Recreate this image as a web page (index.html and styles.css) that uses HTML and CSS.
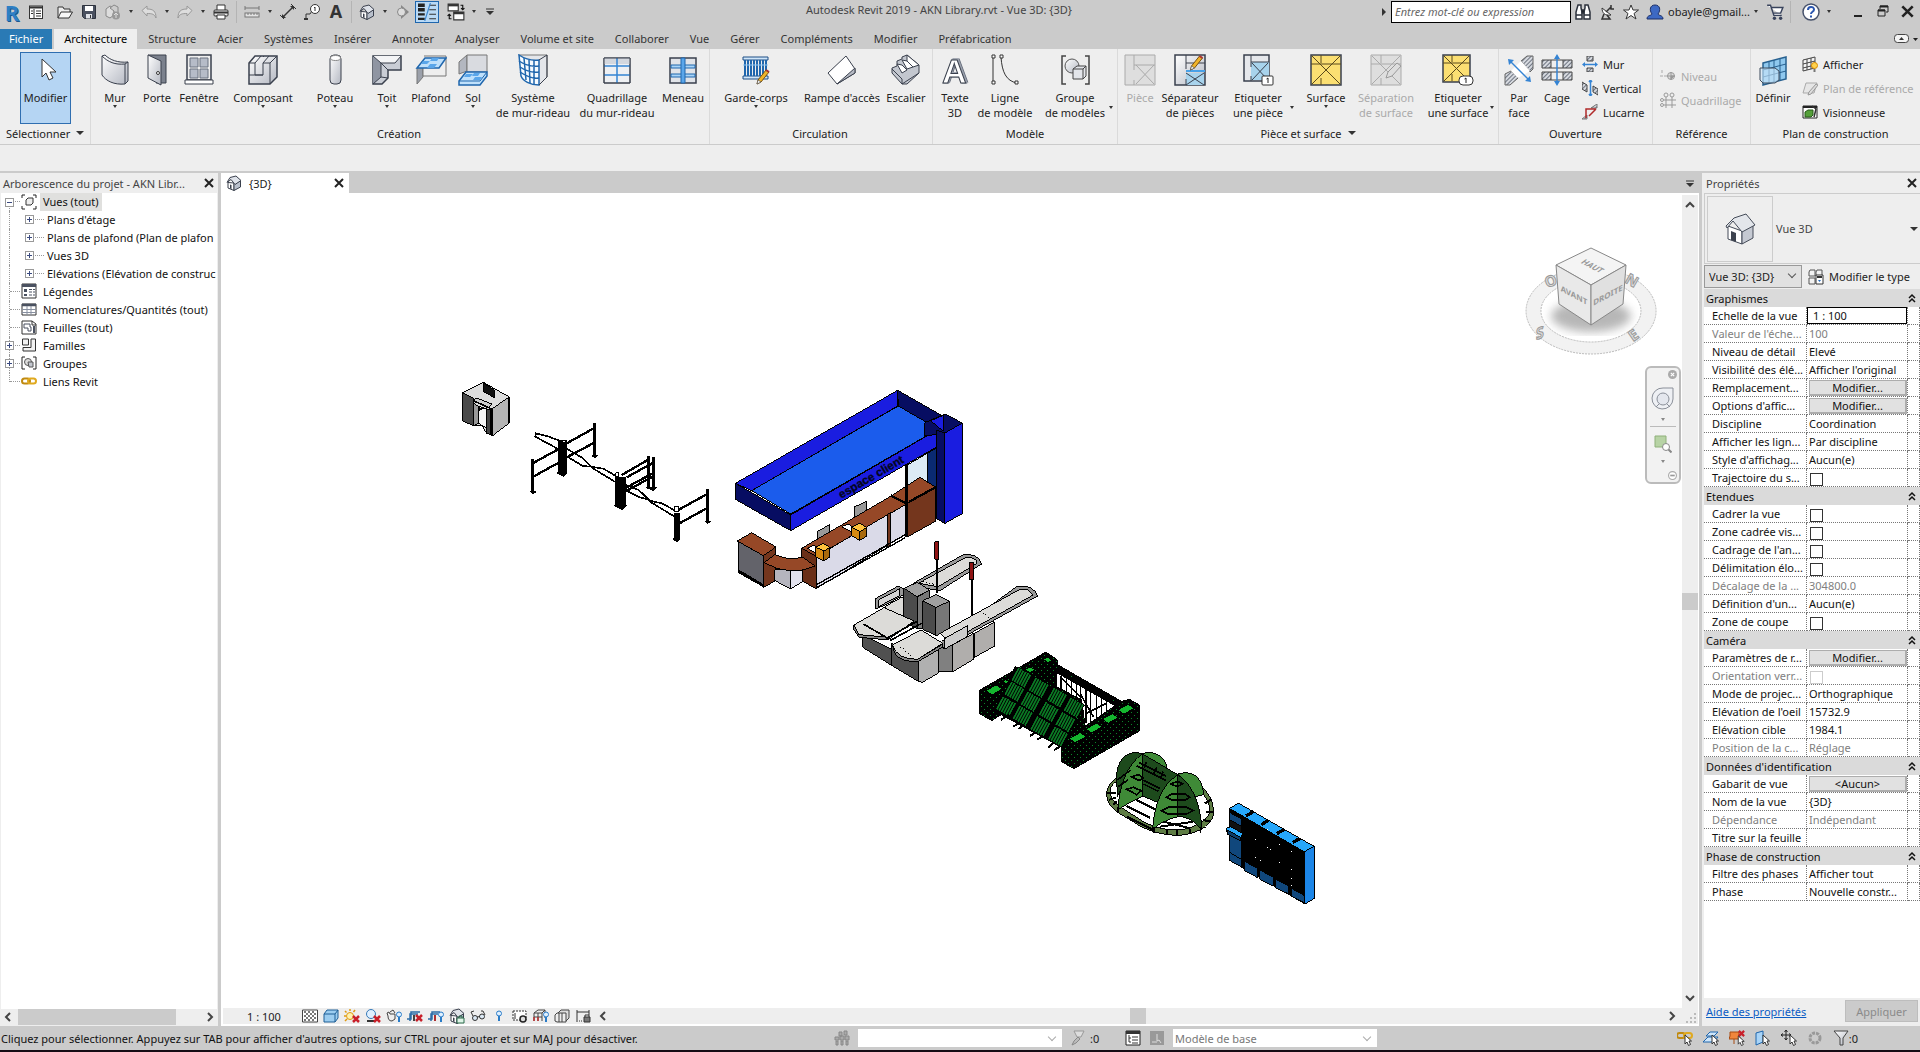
FILE: index.html
```html
<!DOCTYPE html>
<html lang="fr">
<head>
    <meta charset="UTF-8">
    <meta name="viewport" content="width=device-width, initial-scale=1.0">
    <title>Autodesk Revit 2019 - AKN Library.rvt - Vue 3D: {3D}</title>
    <link rel="stylesheet" href="styles.css">
</head>
<body>
    <!-- shared icons -->
    <svg class="sprite" aria-hidden="true">
        <defs>
            <linearGradient id="metal" x1="0" y1="0" x2="1" y2="1">
                <stop offset="0" stop-color="#fff"/><stop offset="1" stop-color="#b4b8c2"/>
            </linearGradient>
            <pattern id="hatch" width="3" height="3" patternUnits="userSpaceOnUse" patternTransform="rotate(45)">
                <rect width="3" height="3" fill="#d6d9df"/><path d="M0 0V3" stroke="#6d7480" stroke-width="2"/>
            </pattern>
        </defs>
        <symbol id="i-house" viewBox="0 0 16 16">
            <path d="M2 7.500V13l6 2.500V8z" fill="#fff" stroke="#3a404d"/>
            <path d="M8 8.500v7L14.500 12V6z" fill="#b9c0cc" stroke="#3a404d"/>
            <path d="M1 7.500L4 2.500 10 1l5 4.500-6 4-4-5z" fill="#dfe3ea" stroke="#3a404d"/>
            <path d="M4 9.500v4l1.500.500v-4z" fill="#3a404d"/>
        </symbol>
        <symbol id="i-close" viewBox="0 0 10 10">
            <path d="M1 1l8 8M9 1L1 9" stroke="#222" stroke-width="2"/>
        </symbol>
        <symbol id="i-left" viewBox="0 0 8 10"><path d="M6 1L2 5l4 4" fill="none" stroke="#444" stroke-width="2"/></symbol>
        <symbol id="i-right" viewBox="0 0 8 10"><path d="M2 1l4 4-4 4" fill="none" stroke="#444" stroke-width="2"/></symbol>
        <symbol id="i-up" viewBox="0 0 10 8"><path d="M1 6l4-4 4 4" fill="none" stroke="#444" stroke-width="2"/></symbol>
        <symbol id="i-down" viewBox="0 0 10 8"><path d="M1 2l4 4 4-4" fill="none" stroke="#444" stroke-width="2"/></symbol>
        <symbol id="i-custom" viewBox="0 0 8 8"><path d="M0 1h8" stroke="#333"/><path d="M0 3h8L4 7z" fill="#333"/></symbol>
        <symbol id="i-fold" viewBox="0 0 8 10"><path d="M1 5l3-3 3 3M1 9l3-3 3 3" fill="none" stroke="#111" stroke-width="1.500"/></symbol>
        <symbol id="i-cross" viewBox="0 0 8 8"><path d="M1 1l6 6M7 1L1 7" stroke="#c8202a" stroke-width="2.500"/></symbol>
        <symbol id="i-bulb" viewBox="0 0 6 12"><circle cx="3" cy="3.500" r="2.500" fill="#dff0ff" stroke="#2a7cc8"/><path d="M3 6v5" stroke="#2a7cc8" stroke-width="2"/></symbol>
        <symbol id="i-arrow" viewBox="0 0 8 12"><path d="M1 1v9l2-2 1.500 3.500 2-1L5 7h2.500z" fill="#fff" stroke="#333"/></symbol>
        <symbol id="i-pencil" viewBox="0 0 14 16"><path d="M1 15l1-4L10 1l3 2-8 10z" fill="#f0b429" stroke="#7b5310"/><path d="M1 15l1-4 3 2z" fill="#fff" stroke="#555" stroke-width=".7"/><path d="M10 1l3 2" stroke="#a33" stroke-width="2"/></symbol>
    </svg>

    <header class="titlebar">
        <div class="qat">
            <button class="qbtn logo" aria-label="Revit">R</button>
            <button class="qbtn" aria-label="Accueil"><svg viewBox="0 0 16 16" width="16" height="16"><rect x="1.500" y="2" width="13" height="12.500" fill="#fff" stroke="#333"/><path d="M1 3.500h14" stroke="#333" stroke-width="2"/><path d="M6 5v9M8 7h5M8 9.500h5M8 12h5M3 7h2M3 9.500h2" stroke="#333"/></svg></button>
            <button class="qbtn after" aria-label="Ouvrir"><svg viewBox="0 0 16 16" width="16" height="16"><path d="M1 14V3h5l1 2h6v3" fill="#eee" stroke="#333"/><path d="M1 14l3-6h11.500L12 14z" fill="#f7f7f7" stroke="#333"/></svg></button>
            <button class="qbtn" aria-label="Enregistrer"><svg viewBox="0 0 16 16" width="16" height="16"><path d="M1.500 1.500h13v13h-11l-2-2z" fill="#4a5160" stroke="#2d323d"/><path d="M4 2h8v5H4z" fill="#fff"/><path d="M5 10h6v4.500H5z" fill="#dfe2e8"/><path d="M9 11h1v3H9z" fill="#333"/></svg></button>
            <button class="qbtn" aria-label="Synchroniser"><svg viewBox="0 0 16 16" width="16" height="16"><path d="M1 5l4-3 4 2v7l-4 3-4-2z" fill="#ddd" stroke="#888"/><path d="M5 4l4-3 4 2v7l-4 3V7z" fill="#ccc" stroke="#888"/><circle cx="11" cy="11.500" r="4" fill="#999"/><path d="M9 11l2-2 2 2M11 9v5" stroke="#ddd" fill="none"/></svg></button>
            <button class="qdrop" aria-label="Options de synchronisation"><i class="caret"></i></button>
            <button class="qbtn" aria-label="Annuler"><svg viewBox="0 0 16 16" width="16" height="16"><path d="M1 6.500L6 2v3c6 0 9 2 9 9-1.500-4-4-4.500-9-4.500v2.500z" fill="#ddd" stroke="#999"/></svg></button>
            <button class="qdrop" aria-label="Liste annuler"><i class="caret"></i></button>
            <button class="qbtn" aria-label="Rétablir"><svg viewBox="0 0 16 16" width="16" height="16"><path d="M15 6.500L10 2v3c-6 0-9 2-9 9 1.500-4 4-4.500 9-4.500v2.500z" fill="#ddd" stroke="#999"/></svg></button>
            <button class="qdrop" aria-label="Liste rétablir"><i class="caret"></i></button>
            <button class="qbtn" aria-label="Imprimer"><svg viewBox="0 0 16 16" width="16" height="16"><path d="M4 6V1h8v5" fill="#fff" stroke="#333"/><rect x="1" y="6" width="14" height="6" rx="1" fill="#e8e8e8" stroke="#333"/><path d="M1 8.500h14" stroke="#333" stroke-width="2"/><path d="M4 11h8v4H4z" fill="#fff" stroke="#333"/></svg></button>
            <span class="qsep"></span>
            <button class="qbtn" aria-label="Mesurer"><svg viewBox="0 0 16 16" width="16" height="16"><path d="M1 2v4M15 2v4M1 4h14" stroke="#777"/><rect x="1" y="9" width="14" height="4" fill="#e2e2e2" stroke="#777"/><path d="M4 9v2M7 9v2M10 9v2M13 9v2" stroke="#777"/></svg></button>
            <button class="qdrop" aria-label="Options de mesure"><i class="caret"></i></button>
            <button class="qbtn" aria-label="Cote alignée"><svg viewBox="0 0 16 16" width="16" height="16"><path d="M3 13L13 3" stroke="#333" stroke-width="1.500"/><path d="M2 10v4h4zM10 2h4v4z" fill="#333"/><path d="M0 11l4 4M11 0l5 5" stroke="#333"/></svg></button>
            <button class="qbtn" aria-label="Etiquette"><svg viewBox="0 0 16 16" width="16" height="16"><path d="M2 15v-5h4l2-3" fill="none" stroke="#333"/><path d="M0 14h4v2H0z" fill="#333"/><circle cx="11" cy="5" r="4.500" fill="#fff" stroke="#333"/><path d="M10 4l1-1v4" fill="none" stroke="#333"/></svg></button>
            <button class="qbtn letter" aria-label="Texte">A</button>
            <span class="qsep"></span>
            <button class="qbtn" aria-label="Vue 3D par défaut"><svg width="16" height="16"><use href="#i-house"/></svg></button>
            <button class="qdrop" aria-label="Liste des vues 3D"><i class="caret"></i></button>
            <button class="qbtn" aria-label="Coupe"><svg viewBox="0 0 16 16" width="16" height="16"><path d="M6 1l8 7-8 7z" fill="#888"/><circle cx="6.500" cy="8" r="4" fill="#ddd" stroke="#888"/></svg></button>
            <button class="qbtn active" aria-label="Lignes fines"><svg viewBox="0 0 16 16" width="18" height="18"><path d="M0 2h6M0 6h6" stroke="#222" stroke-width="3"/><path d="M0 10h6M0 14h6" stroke="#222" stroke-width="2"/><path d="M10 2h6M10 6h6M10 10h6M10 14h6" stroke="#333"/><path d="M11 0L6 16" stroke="#3a86d0"/></svg></button>
            <button class="qbtn after" aria-label="Changer de fenêtre"><svg viewBox="0 0 16 16" width="18" height="18"><path d="M1 1h9v6H1z" fill="#fff" stroke="#333"/><path d="M1 2h9" stroke="#333" stroke-width="2"/><path d="M6 8h9v7H6z" fill="#fff" stroke="#333"/><path d="M6 9h9" stroke="#333" stroke-width="2"/><path d="M12 2h2v4M12.500 4.500L14 6l1.500-1.500M4 14H2v-4M.5 11.500L2 10l1.500 1.500" fill="none" stroke="#111"/></svg></button>
            <button class="qdrop" aria-label="Liste des fenêtres"><i class="caret"></i></button>
            <button class="qdrop last" aria-label="Personnaliser"><svg width="8" height="8"><use href="#i-custom"/></svg></button>
        </div>
        <h1 class="doc-title">Autodesk Revit 2019 - AKN Library.rvt - Vue 3D: {3D}</h1>
        <div class="infocenter">
            <i class="caret side"></i>
            <input class="search" type="text" placeholder="Entrez mot-clé ou expression" aria-label="Recherche">
            <button class="qbtn" aria-label="Rechercher"><svg viewBox="0 0 16 16" width="16" height="16"><path d="M3 1h3v3l1 4v7H1V8zM10 1h3l2 7v7H9V8l1-4z" fill="#fff" stroke="#2d323d" stroke-width="1.500"/><path d="M7 6h2v3H7zM1 11h6M9 11h6" stroke="#2d323d" stroke-width="1.500"/></svg></button>
            <button class="qbtn" aria-label="Communication"><svg viewBox="0 0 16 16" width="16" height="16"><path d="M3 4c0 5 3 8 9 7z" fill="#fff" stroke="#333"/><path d="M7 8l5-5M12 1v4h3M5 10l-2 5h8l-3-4" fill="none" stroke="#333" stroke-width="1.500"/></svg></button>
            <button class="qbtn" aria-label="Favoris"><svg viewBox="0 0 16 16" width="16" height="16"><path d="M8 1l2 5h5.500l-4.500 3.500L13 15l-5-3.500L3 15l2-5.500L.5 6H6z" fill="#fff" stroke="#333"/></svg></button>
            <button class="account"><svg viewBox="0 0 18 18" width="18" height="18"><path d="M1 16c0-4 4-3 5-5-3-4-2-9 3-9s6 5 3 9c1 2 5 1 5 5z" fill="#3d69c4" stroke="#1d2f66"/></svg><span>obayle@gmail...</span><i class="caret"></i></button>
            <button class="qbtn" aria-label="Boutique"><svg viewBox="0 0 16 16" width="18" height="18"><path d="M1 2h3l3 9h7M4.500 4H15l-2 5H6" fill="#fff" stroke="#39435c" stroke-width="1.300"/><circle cx="7.500" cy="13.500" r="1.500" fill="#39435c"/><circle cx="13" cy="13.500" r="1.500" fill="#39435c"/></svg></button>
            <span class="qsep"></span>
            <button class="qbtn after" aria-label="Aide"><svg viewBox="0 0 18 18" width="18" height="18"><circle cx="9" cy="9" r="8" fill="#fff" stroke="#47526b" stroke-width="1.500"/><path d="M6 7c0-4 6-4 6-.5C12 9 9 8.500 9 11M9 12.500v2" fill="none" stroke="#2a56b0" stroke-width="2"/></svg></button>
            <button class="qdrop" aria-label="Menu aide"><i class="caret"></i></button>
            <div class="window-btns">
                <button class="wbtn" aria-label="Réduire"><svg viewBox="0 0 12 12" width="12" height="12"><path d="M2 11h8" stroke="#222" stroke-width="2"/></svg></button>
                <button class="wbtn" aria-label="Restaurer"><svg viewBox="0 0 12 12" width="12" height="12"><path d="M3 4V1h8v6H9" fill="none" stroke="#222"/><path d="M3 1.500h8" stroke="#222" stroke-width="2"/><path d="M1 5h7v6H1z" fill="none" stroke="#222"/><path d="M1 5.500h7" stroke="#222" stroke-width="2"/></svg></button>
                <button class="wbtn" aria-label="Fermer"><svg width="13" height="13"><use href="#i-close"/></svg></button>
            </div>
        </div>
    </header>

    <nav class="tabs">
        <a class="tab file" href="#">Fichier</a>
        <a class="tab current" href="#">Architecture</a>
        <a class="tab" href="#">Structure</a>
        <a class="tab" href="#">Acier</a>
        <a class="tab" href="#">Systèmes</a>
        <a class="tab" href="#">Insérer</a>
        <a class="tab" href="#">Annoter</a>
        <a class="tab" href="#">Analyser</a>
        <a class="tab" href="#">Volume et site</a>
        <a class="tab" href="#">Collaborer</a>
        <a class="tab" href="#">Vue</a>
        <a class="tab" href="#">Gérer</a>
        <a class="tab" href="#">Compléments</a>
        <a class="tab" href="#">Modifier</a>
        <a class="tab" href="#">Préfabrication</a>
        <button class="ribbon-toggle" aria-label="Réduire le ruban"><svg viewBox="0 0 24 10" width="24" height="10"><rect x=".5" y=".5" width="14" height="8" rx="3" fill="#f4f4f4" stroke="#444"/><path d="M5 6l2.500-3L10 6z" fill="#333"/><path d="M19 4h5l-2.500 3z" fill="#222"/></svg></button>
    </nav>

    <section class="ribbon">
        <div class="panel select-panel">
            <div class="tools">
                <button class="tool modify"><svg viewBox="0 0 32 32" width="32" height="32"><path d="M12 5v18l4-4 3 7 4-2-3-6h6z" fill="#fff" stroke="#333"/></svg><span>Modifier</span></button>
            </div>
            <div class="panel-title left">Sélectionner <i class="caret big"></i></div>
        </div>

        <div class="panel roomy">
            <div class="tools">
                <button class="tool w48"><svg viewBox="0 0 32 32" width="32" height="32"><path d="M3 2l3-1c5 5 13 8 23 7v19l-3 3C15 31 7 27 3 21z" fill="url(#metal)" stroke="#3a404d"/><path d="M3 2c6 6 13 9 23 8v20M26 10l3-2" fill="none" stroke="#3a404d"/></svg><span>Mur</span><i class="caret"></i></button>
                <button class="tool w36"><svg viewBox="0 0 32 32" width="32" height="32"><path d="M7 1h18v28H15" fill="#7b818d" stroke="#3a404d"/><path d="M7 1l13 6v24L7 24z" fill="url(#metal)" stroke="#3a404d"/><circle cx="17" cy="19" r="1.500" fill="#fff" stroke="#333"/></svg><span>Porte</span></button>
                <button class="tool w48"><svg viewBox="0 0 32 32" width="32" height="32"><path d="M4 1h24v25H4z" fill="#eee" stroke="#3a404d" stroke-width="1.500"/><path d="M7 4h8v9H7zM17 4h8v9h-8zM7 15h8v9H7zM17 15h8v9h-8z" fill="#b6bcc8" stroke="#6b7280"/><path d="M2 26h28v4H2z" fill="#fff" stroke="#3a404d"/></svg><span>Fenêtre</span></button>
                <button class="tool w80"><svg viewBox="0 0 32 32" width="32" height="32"><path d="M2 9l6-7h22v21l-7 7H2z" fill="url(#metal)" stroke="#3a404d" stroke-width="1.500"/><path d="M14 2l-6 7v12h8V9l6-7M17 2l-1 1M2 9h6M16 9h7l7-7M16 21H2M23 9v21" fill="none" stroke="#3a404d"/></svg><span>Composant</span><i class="caret"></i></button>
                <button class="tool w64"><svg viewBox="0 0 32 32" width="32" height="32"><rect x="11" y="1" width="11" height="29" rx="4" fill="url(#metal)" stroke="#3a404d"/><ellipse cx="16.500" cy="4" rx="5" ry="2.500" fill="#fff" stroke="#888"/></svg><span>Poteau</span><i class="caret"></i></button>
                <button class="tool w40"><svg viewBox="0 0 32 32" width="32" height="32"><path d="M2 2h28v14H17v8l-6 6H2z" fill="#c9cdd5" stroke="#3a404d" stroke-width="1.500"/><path d="M2 2l8 7v14l-8 7z" fill="#8f95a2"/><path d="M2 2l8 7h14l6-7z" fill="#f3f4f6"/><path d="M2 2l8 7v14l-8 7M10 9h14l6-7M10 9l7 7M10 23l7 1" fill="none" stroke="#3a404d"/></svg><span>Toit</span><i class="caret"></i></button>
                <button class="tool w48"><svg viewBox="0 0 32 32" width="32" height="32"><path d="M2 14V30l6-7V8z" fill="#9ba0aa" stroke="#777"/><path d="M9 2h22v20H8V8" fill="#eee" stroke="#777"/><path d="M2 14L10 4h21l-7 10z" fill="#bfe0fb" stroke="#1f66ad" stroke-width="1.500"/><path d="M8 7h7l-3 3H6zM17 4h7l-2 3h-7zM15 10h7l-3 4h-7z" fill="#5aa6ea"/></svg><span>Plafond</span></button>
                <button class="tool w36"><svg viewBox="0 0 32 32" width="32" height="32"><path d="M2 20V8l8-7v16z" fill="#b3b7c0" stroke="#777"/><path d="M10 1h20v17H10z" fill="#d9dbe0" stroke="#777"/><path d="M2 27L9 18h21v4l-7 9H2z" fill="#bfe0fb" stroke="#1f66ad" stroke-width="1.500"/><path d="M2 27h21l7-9" fill="none" stroke="#1f66ad"/><path d="M9 20h7l-3 3H7zM18 23h7l-2 3h-7zM17 19h6l-2 3h-6z" fill="#5aa6ea"/></svg><span>Sol</span><i class="caret"></i></button>
                <button class="tool w84"><svg viewBox="0 0 32 32" width="32" height="32"><path d="M2 1h28v22l-8 8z" fill="#e4e6ea" stroke="#777"/><path d="M2 1c6 4 12 6 20 5v25C13 31 6 27 4 22z" fill="#f6fbff" stroke="#1f66ad" stroke-width="1.500"/><path d="M2 7c6 4 12 6 20 5M3 13c6 4 12 6 19 5M3 18c6 4 12 7 19 6M7 4l2 22M12 6l1 23M17 6v25" fill="none" stroke="#1f66ad" stroke-width="1.500"/><path d="M22 6l8-5v22l-8 8" fill="none" stroke="#3a404d"/></svg><span>Système<br>de mur-rideau</span></button>
                <button class="tool w84"><svg viewBox="0 0 32 32" width="32" height="32"><path d="M3 4h26v25H3z" fill="#eef0f3" stroke="#3a404d"/><path d="M3 4h26v6H3z" fill="#d3d7de"/><path d="M16 4v25M3 12h26M3 21h26" stroke="#3584d4" stroke-width="1.500"/><path d="M3 4h26v25H3z" fill="none" stroke="#3a404d"/></svg><span>Quadrillage<br>du mur-rideau</span></button>
                <button class="tool w48"><svg viewBox="0 0 32 32" width="32" height="32"><path d="M3 4h26v25H3z" fill="#e0e3e8" stroke="#3a404d" stroke-width="1.500"/><path d="M4 11h24v3H4zM4 20h24v3H4z" fill="#a9d4f7" stroke="#1f66ad"/><path d="M14 4h4v25h-4z" fill="#5aa6ea" stroke="#1f66ad"/></svg><span>Meneau</span></button>
            </div>
            <div class="panel-title">Création</div>
        </div>

        <div class="panel roomy">
            <div class="tools">
                <button class="tool w92"><svg viewBox="0 0 32 32" width="32" height="32"><path d="M3 3h25v3H3zM3 22h25v3H3z" fill="#cfe6fa" stroke="#1f4f85"/><path d="M5 6v16M8 6v16M11 6v16M14 6v16M17 6v16M20 6v16M23 6v16M26 6v16" stroke="#1f66ad" stroke-width="2"/><path d="M3 11h25" stroke="#8cc4f2"/><use href="#i-pencil" x="16" y="15" width="14" height="16"/></svg><span>Garde-corps</span><i class="caret"></i></button>
                <button class="tool w80"><svg viewBox="0 0 32 32" width="32" height="32"><path d="M2 19L20 2l9 13v4L11 30z" fill="#fff" stroke="#3a404d"/><path d="M11 30l18-11v-5z" fill="#b4b8c2" stroke="#3a404d"/></svg><span>Rampe d'accès</span></button>
                <button class="tool w48"><svg viewBox="0 0 32 32" width="32" height="32"><path d="M2 14l5-2v-5l5-2V3l5-2 12 10v8L17 30h-5L2 19z" fill="#c3c7cf" stroke="#3a404d"/><path d="M17 1l12 10-6 2-6-6zM12 6l5 1 6 6-6 2zM7 10l5 1 5 5-5 3z" fill="#fff" stroke="#3a404d"/><path d="M2 15l10 10v5l17-11" fill="none" stroke="#3a404d"/></svg><span>Escalier</span></button>
            </div>
            <div class="panel-title">Circulation</div>
        </div>

        <div class="panel">
            <div class="tools">
                <button class="tool w44"><svg class="big-a" viewBox="0 0 32 32" width="32" height="32"><text x="3" y="29">A</text></svg><span>Texte<br>3D</span></button>
                <button class="tool w56"><svg viewBox="0 0 32 32" width="32" height="32"><path d="M4 3v26M12 3c1 15 5 24 16 26" fill="none" stroke="#333"/><path d="M3 1h3v3H3zM3 27h3v3H3zM11 1h3v3h-3zM26 27h3v3h-3z" fill="#fff" stroke="#333"/></svg><span>Ligne<br>de modèle</span></button>
                <button class="tool w84 split"><svg viewBox="0 0 32 32" width="32" height="32"><path d="M7 2H3v28h4M26 2h4v28h-4" fill="none" stroke="#444" stroke-width="1.500"/><circle cx="13" cy="12" r="7" fill="url(#metal)" stroke="#555"/><path d="M14 15l4-3h9v10l-3 3H14z" fill="#e3e5ea" stroke="#444"/><path d="M14 15h10v10M24 15l3-3" fill="none" stroke="#444"/></svg><span>Groupe<br>de modèles</span><i class="caret"></i></button>
            </div>
            <div class="panel-title">Modèle</div>
        </div>

        <div class="panel">
            <div class="tools">
                <button class="tool w44" disabled><svg viewBox="0 0 32 32" width="32" height="32"><path d="M1 1h30v30H1z" fill="#dedede" stroke="#aaa"/><path d="M10 1v15M10 11h21M10 26v5M12 11l18 19M30 11L12 30" fill="none" stroke="#aaa"/></svg><span>Pièce</span></button>
                <button class="tool w56"><svg viewBox="0 0 32 32" width="32" height="32"><path d="M1 1h30v30H1z" fill="url(#metal)" stroke="#3a404d" stroke-width="1.500"/><path d="M12 19h18v12H12z" fill="#a8d3ec"/><path d="M12 1v14M12 25v6M12 9h19M12 19l18 12M30 19L12 31" fill="none" stroke="#3a404d"/><path d="M12 17h19" stroke="#48a1e8" stroke-width="2"/><use href="#i-pencil" x="15" y="1" width="15" height="16"/></svg><span>Séparateur<br>de pièces</span></button>
                <button class="tool w80 split"><svg viewBox="0 0 32 32" width="32" height="32"><path d="M2 1h25v26H2z" fill="#e6e8ec" stroke="#3a404d" stroke-width="1.500"/><path d="M9 8h18v18H9z" fill="#a8d3ec"/><path d="M9 1v12M9 22v5M9 8h18M10 9l16 17M26 9L10 26" fill="none" stroke="#3a404d"/><rect x="20" y="22" width="11" height="9" rx="1" fill="#fff" stroke="#333"/><path d="M24.500 25l1.500-1v5" fill="none" stroke="#222"/></svg><span>Etiqueter<br>une pièce</span><i class="caret"></i></button>
                <button class="tool w56"><svg viewBox="0 0 32 32" width="32" height="32"><path d="M1 1h30v30H1z" fill="#fbdf72" stroke="#3a404d" stroke-width="1.500"/><path d="M11 1v8M1 10h30M11 24v7M2 2l28 28M30 2L2 30" fill="none" stroke="#5a4a1c"/></svg><span>Surface</span><i class="caret"></i></button>
                <button class="tool w64" disabled><svg viewBox="0 0 32 32" width="32" height="32"><path d="M1 1h30v30H1z" fill="#dedede" stroke="#aaa"/><path d="M11 1v8M1 10h30M11 24v7M2 2l28 28M30 2L2 30" fill="none" stroke="#aaa"/><path d="M16 24l2-6L27 9l4 3-9 10z" fill="#ddd" stroke="#999"/></svg><span>Séparation<br>de surface</span></button>
                <button class="tool w80 split"><svg viewBox="0 0 32 32" width="32" height="32"><path d="M1 1h27v27H1z" fill="#fbdf72" stroke="#3a404d" stroke-width="1.500"/><path d="M10 1v7M1 9h27M10 20v7M2 2l25 25M27 2L2 27" fill="none" stroke="#5a4a1c"/><rect x="17" y="22" width="14" height="9" rx="4" fill="#fff" stroke="#333"/><path d="M22.500 25l1.500-1v5" fill="none" stroke="#222"/></svg><span>Etiqueter<br>une surface</span><i class="caret"></i></button>
            </div>
            <div class="panel-title">Pièce et surface <i class="caret big"></i></div>
        </div>

        <div class="panel opening">
            <div class="tools">
                <button class="tool w40"><svg viewBox="0 0 32 32" width="32" height="32"><path d="M2 20l6-3 7 6v1l-8 7H2zM18 7l6-5h6v13l-3 3z" fill="url(#hatch)" stroke="#666"/><path d="M8 17L18 7l9 10-12 7z" fill="#fff"/><path d="M7 7l19 19" stroke="#3584d4" stroke-width="1.500"/><path d="M5 5l6 1-5 5zM28 28l-6-1 5-5z" fill="#3584d4"/></svg><span>Par<br>face</span></button>
                <button class="tool w36"><svg viewBox="0 0 32 32" width="32" height="32"><path d="M1 6h9v8H1zM22 6h9v8h-9zM1 18h9v8H1zM22 18h9v8h-9z" fill="url(#hatch)" stroke="#444"/><path d="M10 6h12M10 14h12M10 18h12M10 26h12" stroke="#444"/><path d="M16 3v26" stroke="#3584d4" stroke-width="1.500"/><path d="M16 0l3 5h-6zM16 32l3-5h-6z" fill="#3584d4"/></svg><span>Cage</span></button>
                <div class="stack">
                    <button class="small"><svg viewBox="0 0 16 16" width="16" height="16"><path d="M5 0h6v5H5zM5 12h6v4H5z" fill="url(#hatch)" stroke="#444"/><path d="M2 8.500h12" stroke="#3584d4" stroke-width="1.500"/><path d="M0 8.500l3-2.500v5zM16 8.500L13 6v5z" fill="#3584d4"/></svg>Mur</button>
                    <button class="small"><svg viewBox="0 0 16 16" width="16" height="16"><path d="M0 2l5 3v7L0 9zM11 6l5 3v6l-5-3z" fill="url(#hatch)" stroke="#444"/><path d="M8.500 0v16M7 2l1.500-2L10 2M7 14l1.500 2 1.500-2" fill="none" stroke="#3584d4" stroke-width="1.500"/></svg>Vertical</button>
                    <button class="small"><svg viewBox="0 0 16 16" width="16" height="16"><path d="M0 15l5-4v4zM9 4l6-4v4z" fill="url(#hatch)" stroke="#777"/><path d="M4 14V5h10M7 12l7-7" fill="none" stroke="#b02a2a" stroke-width="1.500"/></svg>Lucarne</button>
                </div>
            </div>
            <div class="panel-title">Ouverture</div>
        </div>

        <div class="panel datum">
            <div class="tools">
                <div class="stack low">
                    <button class="small" disabled><svg viewBox="0 0 16 16" width="16" height="16"><path d="M0 8h16M2 2v4" stroke="#aaa" stroke-dasharray="3 1"/><circle cx="11" cy="8" r="3.500" fill="#ddd" stroke="#999"/><path d="M11 4v8M7 8h8M11 8h3l-3 3z" fill="#999" stroke="#999"/></svg>Niveau</button>
                    <button class="small" disabled><svg viewBox="0 0 16 16" width="16" height="16"><circle cx="6" cy="3" r="2" fill="none" stroke="#999"/><circle cx="12" cy="3" r="2" fill="none" stroke="#999"/><circle cx="2" cy="8" r="1.500" fill="none" stroke="#999"/><circle cx="2" cy="13" r="1.500" fill="none" stroke="#999"/><path d="M6 5v11M12 5v11M4 8h12M4 13h12" stroke="#999"/></svg>Quadrillage</button>
                </div>
            </div>
            <div class="panel-title">Référence</div>
        </div>

        <div class="panel last">
            <div class="tools">
                <button class="tool w44"><svg viewBox="0 0 32 32" width="32" height="32"><path d="M6 9l23-6v22L6 31z" fill="#8fc8ee" stroke="#27608f" stroke-width="1.500"/><path d="M12 8v22M17 6v23M23 5v22M6 16l23-6M6 23l23-6" fill="none" stroke="#27608f"/><path d="M3 14h15l4 3v9l-4 3H6l-3-3z" fill="#cfe8fa" fill-opacity=".6" stroke="#3c4a5c"/></svg><span>Définir</span></button>
                <div class="stack">
                    <button class="small"><svg viewBox="0 0 16 16" width="16" height="16"><path d="M1 4l12-3v11L1 15zM5 3v11M9 2v11M1 8l12-3M1 12l12-3" fill="#f4f4f4" stroke="#444"/><circle cx="12.500" cy="9.500" r="3" fill="#ffd24d" stroke="#d98a00"/><path d="M12.500 13v3" stroke="#777" stroke-width="2"/></svg>Afficher</button>
                    <button class="small" disabled><svg viewBox="0 0 16 16" width="16" height="16"><path d="M1 13L4 3h11l-3 10z" fill="#e6e6e6" stroke="#aaa"/><path d="M6 15l1-3 7-8 2 1-7 9z" fill="#ddd" stroke="#999"/></svg>Plan de référence</button>
                    <button class="small"><svg viewBox="0 0 16 16" width="16" height="16"><path d="M1 2h14v12H1z" fill="#fff" stroke="#222"/><path d="M1 3h14" stroke="#222" stroke-width="2"/><path d="M3 8l3-2h5v5l-2 2H3z" fill="#55a03a" stroke="#265a18"/><path d="M10 2l4 3-2 8" fill="none" stroke="#333" stroke-width="1.500"/></svg>Visionneuse</button>
                </div>
            </div>
            <div class="panel-title">Plan de construction</div>
        </div>
    </section>

    <div class="options-bar"></div>

    <main class="workspace">
        <aside class="browser">
            <div class="pal-title"><span>Arborescence du projet - AKN Libr...</span><button class="x" aria-label="Fermer l'arborescence"><svg width="10" height="10"><use href="#i-close"/></svg></button></div>
            <ul class="tree">
                <li class="node first"><i class="exp minus"></i><svg viewBox="0 0 16 16" width="16" height="16"><path d="M4 1H1v3M12 1h3v3M4 15H1v-3M12 15h3v-3" fill="none" stroke="#222"/><path d="M5 6l2-2h5v5l-2 2H5z" fill="#eee" stroke="#333"/></svg><span class="sel">Vues (tout)</span></li>
                <li class="node sub"><i class="exp"></i><span>Plans d'étage</span></li>
                <li class="node sub"><i class="exp"></i><span>Plans de plafond (Plan de plafon</span></li>
                <li class="node sub"><i class="exp"></i><span>Vues 3D</span></li>
                <li class="node sub"><i class="exp"></i><span>Elévations (Elévation de construc</span></li>
                <li class="node"><i class="exp none"></i><svg viewBox="0 0 16 16" width="16" height="16"><path d="M1 1h14v14H1z" fill="#fff" stroke="#333"/><path d="M1 2.500h14" stroke="#4a5160" stroke-width="3"/><path d="M3 6h3v3H3zM3 11h3v2H3z" fill="#4a5160"/><path d="M8 6.500h6M8 9h6M8 12h6" stroke="#4a5160" stroke-dasharray="3 1"/></svg><span>Légendes</span></li>
                <li class="node"><i class="exp none"></i><svg viewBox="0 0 16 16" width="16" height="16"><path d="M1 3h14v11H1z" fill="#fff" stroke="#333"/><path d="M1 4h14" stroke="#4a5160" stroke-width="2.500"/><path d="M1 8.500h14M1 11.500h14M6 5v9M10 5v9" stroke="#8890a0"/></svg><span>Nomenclatures/Quantités (tout)</span></li>
                <li class="node"><i class="exp none"></i><svg viewBox="0 0 16 16" width="16" height="16"><path d="M1 2h10l4 3v10H1z" fill="#fff" stroke="#333"/><path d="M11 2v4h4" fill="none" stroke="#333"/><path d="M3 5h6v3h1v4H7V9H3z" fill="none" stroke="#4a5160"/><path d="M13 7v7" stroke="#4a5160" stroke-width="2"/></svg><span>Feuilles (tout)</span></li>
                <li class="node"><i class="exp"></i><svg viewBox="0 0 16 16" width="16" height="16"><path d="M1.500 2h6v6h-6zM10 2h4.500v12H2v-3.500h8z" fill="#f2f2f2" stroke="#333"/></svg><span>Familles</span></li>
                <li class="node"><i class="exp"></i><svg viewBox="0 0 16 16" width="16" height="16"><path d="M4 2H1v12h3M12 2h3v12h-3" fill="none" stroke="#222"/><circle cx="7" cy="7" r="3.500" fill="#ddd" stroke="#555"/><path d="M7 7h5v5H8z" fill="#c3c7cf" stroke="#555"/></svg><span>Groupes</span></li>
                <li class="node tail"><i class="exp none"></i><svg viewBox="0 0 16 16" width="16" height="16"><rect x="1" y="5.500" width="8" height="5" rx="2.500" fill="none" stroke="#c08a10" stroke-width="2"/><rect x="7" y="5.500" width="8" height="5" rx="2.500" fill="none" stroke="#e0a91e" stroke-width="2"/></svg><span>Liens Revit</span></li>
            </ul>
            <div class="hscroll">
                <svg width="8" height="10"><use href="#i-left"/></svg>
                <div class="track"><div class="thumb tree-thumb"></div></div>
                <svg width="8" height="10"><use href="#i-right"/></svg>
            </div>
        </aside>

        <section class="view">
            <div class="view-tabs">
                <div class="view-tab"><svg width="16" height="16"><use href="#i-house"/></svg><span>{3D}</span><button class="x" aria-label="Fermer la vue"><svg width="10" height="10"><use href="#i-close"/></svg></button></div>
                <button class="tab-list" aria-label="Liste des onglets"><svg width="8" height="8"><use href="#i-custom"/></svg></button>
            </div>
            <div class="view-body">
                <div class="canvas">
                    <svg class="model" viewBox="221 193 1461 815" preserveAspectRatio="xMidYMid meet" shape-rendering="crispEdges">
                        <defs>
                            <pattern id="slats" width="8" height="8" patternUnits="userSpaceOnUse" patternTransform="rotate(28)"><rect width="8" height="8" fill="#0a7a24"/><path d="M1 0V8" stroke="#000" stroke-width="4"/></pattern>
                            <pattern id="mesh" width="18" height="18" patternUnits="userSpaceOnUse"><rect width="18" height="18" fill="#000"/><path d="M1 3h3M10 12h3" stroke="#0b8a2a" stroke-width="3"/></pattern>
                            <path id="slat" d="M-9-31L33-7 11 33-31 9z" fill="url(#slats)" stroke="#000" stroke-width="3"/>
                        </defs>

                        <!-- booth and turnstiles -->
                        <g transform="translate(440 370) scale(.3333)" stroke="#000" stroke-width="3" fill="none">
                            <path d="M67 68L130 37l78 44v78l-51 38-18-8-12-21-27-2-33-15z" fill="#ddd"/>
                            <path d="M67 68l33 17v82l-33-15z" fill="#4a4a4a"/>
                            <path d="M100 100l15 8v52l-15 7z" fill="#999"/>
                            <path d="M115 108l24 8v58l-24-14z" fill="#f4f4f4"/>
                            <path d="M139 116l13 5v74l-13-7z" fill="#444"/>
                            <path d="M158 115l50-34v78l-50 38z" fill="#b5b5b5"/>
                            <path d="M100 92l10-8 45 18-8 12z" fill="#ccc"/>
                            <path d="M152 117v78M156 117v78M207 82v76" stroke-width="6"/>
                            <path d="M131 40l32 20v23l-32-18z" fill="#111"/>
                            <path d="M100 92l55 25M118 108v12l12-6" stroke-width="5"/>
                            <g stroke-width="8">
                                <path d="M463 160v98M278 268v98M626 257v96M641 262v96M802 357v98"/>
                            </g>
                            <g stroke-width="7">
                                <path d="M380 220l83-46M380 262l83-44M278 280l80-44M278 321l80-44M545 315l80-46M560 322l80-44M555 355l85-46M555 365l85-46M715 420l87-48M715 462l87-48"/>
                                <path d="M358 212l-32-12-38-10-2 10 70 38M380 236l48 28 26 26-26-2-46-28M454 290l36 6 38 22M454 292l72 44M556 344l40 16 32 30-28-8-40-20M628 392l38 8 40 22M628 394l76 46" stroke-width="5"/>
                            </g>
                            <path d="M357 212h23v98h-23zM527 322h29v88h-29zM704 430h14v78h-14z" fill="#000"/>
                            <path d="M350 309h30l-8 10zM522 407h38l-14 12zM698 507h22l-8 8zM455 257h18l-8 7zM270 365h18l-8 6zM617 352h32l-8 10zM794 454h18l-9 6z" fill="#000"/>
                            <path d="M527 310l10-4v14h-10zM703 410h14v14h-14zM365 215q8-8 15 0" fill="#fff"/>
                        </g>

                        <!-- reception desk and checkouts -->
                        <g transform="translate(720 370) scale(.3333)" stroke="#000" stroke-width="3">
                            <path d="M562 285l60-35v92l-60 32z" fill="#dcebf5"/>
                            <path d="M622 250l28-16v118l-28-15z" fill="#0a2a72"/>
                            <path d="M46 340L533 61v47L95 362z" fill="#1a1de0"/>
                            <path d="M533 61l130 74-13 50-115-77z" fill="#070d62"/>
                            <path d="M95 362L535 108l83 48v36l32-12-438 252z" fill="#1b5cec"/>
                            <path d="M46 340l166 95v47L46 388z" fill="#070d62"/>
                            <path d="M212 435l438-254v50L212 482z" fill="#1a1de0"/>
                            <path d="M615 158l60-26 52 27-52 30-60 9z" fill="#070d62"/>
                            <path d="M632 152l38-16v48z" fill="#1a1de0"/>
                            <path d="M650 180l25 9v271l-25-13z" fill="#070d62"/>
                            <path d="M675 189l52-30v272l-52 29z" fill="#1a1de0"/>
                            <path d="M403 411l37-17v35l-37 18zM292 485l37-21v32l-37 17z" fill="#999"/>
                            <path d="M245 535l265-155 90-58 48 30-88 50-272 157z" fill="#964827"/>
                            <path d="M290 559l218-128v92L290 655z" fill="#dadae8"/>
                            <path d="M512 430l46-27v90l-46 27z" fill="#dadae8"/>
                            <path d="M560 402l88-50v101l-88 49z" fill="#74361d"/>
                            <path d="M504 432l8-4v98l-8 4z" fill="#74361d"/>
                            <path d="M245 535l44 24v98l-42-24z" fill="#6a2f18"/>
                            <path d="M292 643L556 494M292 652L556 503" fill="none" stroke-width="4"/>
                            <path d="M512 376l45 24M560 285v215M568 395l80-44" fill="none" stroke-width="7"/>
                            <path d="M52 513l43-25 73 43-38 26z" fill="#964827"/>
                            <path d="M55 515l75 42v93l-75-42z" fill="#63636a"/>
                            <path d="M130 557l38-26v100l-38 22z" fill="#74361d"/>
                            <path d="M165 600h47v57l-47-25z" fill="#b5b5be"/>
                            <path d="M212 600h35v35l-35 22z" fill="#e3e3ee"/>
                            <path d="M132 578l33-24q45 20 82 7l38 27q-75 34-153-10z" fill="#964827"/>
                            <path d="M56 603l74 44" fill="none" stroke-width="8"/>
                            <path d="M262 535l20-10 20 14-15 10zM365 470l20-8 22 16-10 8z" fill="#fff"/>
                            <path d="M288 532l22-12 20 12-18 11z" fill="#ffc23c"/><path d="M288 532l24 11v30l-24-12z" fill="#d68a12"/><path d="M312 543l18-11v29l-18 12z" fill="#a8690c"/>
                            <path d="M395 471l24-12 21 14-20 12z" fill="#ffc23c"/><path d="M395 471l25 14v26l-25-13z" fill="#d68a12"/><path d="M420 485l20-12v25l-20 13z" fill="#a8690c"/>
                            <text class="sign" x="0" y="0" transform="translate(364 386) rotate(-30)">espace client</text>

                            <path d="M428 795l90 45v48l-90-56z" fill="#505050"/>
                            <path d="M515 820l80 50v64l-80-48z" fill="#505050"/>
                            <path d="M595 872l60-35v73l-48 27-12-4z" fill="#b0b0b0"/>
                            <path d="M655 838l42-24v92h-40z" fill="#808080"/>
                            <path d="M697 825l64-35v78l-64 38z" fill="#b0aeac"/>
                            <path d="M764 790l60-34v72l-60 34z" fill="#b0aeac"/>
                            <path d="M580 640l150-86q45-5 55 28l-125 80-50-8z" fill="#999"/>
                            <path d="M595 640l143-78q30-2 34 18L655 650z" fill="#dcdbd8"/>
                            <path d="M468 685l65-36 17 6v20l-50 28-32 14z" fill="#999"/>
                            <path d="M476 690l64-34v20l-64 34z" fill="#d4d4d4"/>
                            <path d="M495 710l50-28 50 30v40l-50 10z" fill="#dcdbd8"/>
                            <path d="M552 655l40-18 38 24-42 20z" fill="#a0a0a0"/><path d="M552 655l40 26v95l-40-20z" fill="#4c4c4c"/><path d="M592 681l36-20v110l-36 5z" fill="#777"/>
                            <path d="M402 765l90-52 90 40-75 55-88-8-18-20z" fill="#dcdbd8"/>
                            <path d="M402 766l14 28 92 8-3 8-88-8-15-22z" fill="#888"/>
                            <path d="M430 762l75 44M500 805l95-53M510 812l95-52" fill="none" stroke-width="5"/>
                            <path d="M518 825l85-45 65 40-75 48q-60 8-75-43z" fill="#dcdbd8"/>
                            <path d="M518 825q12 44 75 43l75-45v8l-72 43q-75 5-78-49z" fill="#888"/>
                            <path d="M665 815l225-165q50-8 63 28L670 835z" fill="#999"/>
                            <path d="M660 790l240-132q30-2 38 18L690 815z" fill="#dcdbd8"/>
                            <path d="M675 805l68-38v32l-68 38z" fill="#ccc"/>
                            <path d="M608 692l40-18 40 20-40 18z" fill="#a0a0a0"/><path d="M608 692l40 20v84l-40-18z" fill="#4c4c4c"/><path d="M648 712l40-18v80l-40 24z" fill="#777"/>
                            <path d="M608 634l40 10M540 830l35 30M788 728l35 28" fill="none" stroke-dasharray="4 6"/>
                            <path d="M651 570v100M755 630v104M762 790v75" fill="none" stroke-width="6"/>
                            <path d="M644 515h12v53h-12zM749 577h12v52h-12z" fill="#8f1414"/>
                        </g>

                        <!-- shelving, dome and panel -->
                        <g transform="translate(960 630) scale(.3333)" stroke="#000" stroke-width="3">
                            <path d="M60 180L258 66l34 24v20l190 105 26-7 32 18v76L342 416l-36-20v-50L130 250l-35 22-35-20z" fill="url(#mesh)"/>
                            <path d="M285 125l180 102-90 62-10-80-75-38z" fill="#fff"/>
                            <path d="M290 130v40M303 138v42M320 145v50M335 155v50M350 160v60M362 170v80M378 178v100M392 185v90M410 195v70M425 205v50M440 213v30M300 140l60 60M360 190l40 70M380 250l60-30" fill="none" stroke-width="5"/>
                            <path d="M292 108l195 112M290 120l180 105" fill="none" stroke-width="10"/>
                            <path d="M60 180l38 22v70l-38-20zM306 332l36 18v66l-36-20z" fill="url(#mesh)"/>
                            <g fill="#14b52e">
                                <path d="M78 182l30-17 18 12-30 18zM196 119l14-8 14 8-14 9zM250 88l12-7 14 10-12 7zM328 326l32-18 18 12-32 18zM378 297l32-18 16 12-32 18zM428 267l30-16 16 12-30 17zM474 240l30-17 18 12-30 18zM128 155l8-6 10 6-8 6z"/>
                            </g>
                            <path d="M165 110l200 112-70 125-185-100z" fill="#000"/>
                            <use href="#slat" x="183" y="142"/><use href="#slat" x="162" y="184"/><use href="#slat" x="137" y="228"/>
                            <use href="#slat" x="235" y="172"/><use href="#slat" x="211" y="214"/><use href="#slat" x="187" y="256"/>
                            <use href="#slat" x="290" y="202"/><use href="#slat" x="265" y="245"/><use href="#slat" x="240" y="288"/>
                            <use href="#slat" x="340" y="232"/><use href="#slat" x="315" y="275"/><use href="#slat" x="293" y="318"/>
                            <path d="M148 255l-25 14M175 280l-15 10M190 285l-15 12M225 308l-15 10M250 318l-18 10M280 340l-15 12M300 350l-18 10" fill="none" stroke-width="6"/>

                            <path d="M440 490C440 455 490 420 560 415L690 450C740 470 762 510 760 550S700 616 650 616C600 614 570 602 540 588L470 545C450 530 440 510 440 490z" fill="#5f7d45"/>
                            <path d="M450 480C455 455 500 430 555 425L680 460C730 480 750 515 750 542S695 600 650 600C610 600 580 590 550 575L480 530C460 515 450 500 450 480z" fill="#fff"/>
                            <path d="M442 490h25M447 510l22-8M460 525l10-12M735 520l20-12M738 545h20M730 570l20 5M500 528l70 35M530 510l60 30M500 560l80 40M620 600v14M650 600v16M690 598v12M600 590l100-15M610 575l80 20" fill="none" stroke-width="6"/>
                            <path d="M470 435C475 375 515 360 548 372L500 440 472 500z" fill="#1d4a1c"/>
                            <path d="M548 370c40-10 70 15 72 42l-40 20z" fill="#3f8a37"/>
                            <path d="M655 432c50-15 75 20 75 62l-40 10z" fill="#3f8a37"/>
                            <path d="M548 372l105 62-45 90-60-26z" fill="#1d4a1c"/>
                            <path d="M548 372C505 400 478 460 474 540q10-10 74-42z" fill="#3f8a37"/>
                            <path d="M653 434C610 460 582 520 578 600q20-25 75-40z" fill="#3f8a37"/>
                            <path d="M653 434c45 30 70 90 72 166-20-30-50-40-72-40z" fill="#1d4a1c"/>
                            <g fill="none" stroke-width="5">
                                <path d="M538 398l80 40M530 408l88 44M560 395l-8 18M590 412l-8 18M610 425l-8 18M550 450l50 25M550 462l45 22M472 450l40-30M474 470l30-20"/>
                                <path d="M620 502l15-10h40l15 10-15 8h-40zM605 542l20-10h55l20 10-20 10h-55zM632 462l20-8 16 8-16 8zM500 478l20-6 24 10-14 12zM515 440l20-6 16 10-14 8z"/>
                                <path d="M474 530v15M582 590v18M722 590v18"/>
                            </g>

                            <path d="M808 535l227 125v162L808 690z" fill="#000"/>
                            <path d="M808 535l28-15 228 130-29 17z" fill="#26a7fb"/>
                            <path d="M1035 664l29-15v156l-29 17z" fill="#1c86e8"/>
                            <path d="M810 548l37 20v140l-37-20z" fill="#10477c"/>
                            <path d="M810 570l37 20v32l-37-20z" fill="#111"/>
                            <path d="M855 695l38 20v28l-38-20zM900 720l40 22v26l-40-20zM948 748l38 20v24l-38-18zM994 775l40 22v22l-40-20zM810 668l37 22v22l-37-20z" fill="#10477c"/>
                            <path d="M858 558l22-13M904 584l22-13M951 611l22-13M998 638l22-13M849 568v140" stroke-width="10"/>
                            <path d="M800 595l12-5 36 20-6 20-42-25z" fill="#26a7fb"/><path d="M802 600l40 22v10l-40-20z" fill="#0c3d6b"/>
                            <path d="M885 630h3M922 598h3M922 653h3M958 645h3M994 666h3M958 697h3M886 683h3M900 692h3M994 745h3M994 718h3M994 768h3M930 658h3" stroke="#fff"/>
                        </g>
                    </svg>

                    <svg class="viewcube" viewBox="0 0 132 110" width="132" height="110">
                        <defs><filter id="soft"><feGaussianBlur stdDeviation="5"/></filter></defs>
                        <path d="M66 24a65 43 0 1 0 .1 0zM66 36a50 31 0 1 1-.1 0z" fill="#f2f2f2" stroke="#bbb" stroke-dasharray="2 1"/>
                        <ellipse cx="66" cy="72" rx="40" ry="16" fill="#999" opacity=".7" filter="url(#soft)"/>
                        <g class="compass"><text transform="translate(11 96) rotate(-20) skewX(-20)">S</text><text transform="translate(108 98) rotate(-35)">E</text><text transform="translate(22 44) rotate(-20)">O</text><text transform="translate(99 38) rotate(30)">N</text></g>
                        <path d="M66 4L31 21l35 20 35-20z" fill="#f4f4f4" stroke="#888"/>
                        <path d="M31 21l35 20v40L34 60z" fill="#e9e9e9" stroke="#888"/>
                        <path d="M101 21L66 41v40l32-21z" fill="#e0e0e0" stroke="#888"/>
                        <g class="cube-face" text-anchor="middle">
                            <text transform="translate(49 54) skewY(28)">AVANT</text>
                            <text transform="translate(83 54) skewY(-28)">DROITE</text>
                            <text transform="translate(65 24) rotate(28) skewX(-25)">HAUT</text>
                        </g>
                    </svg>

                    <div class="navbar">
                        <button aria-label="Fermer la barre"><svg viewBox="0 0 8 8" width="9" height="9"><circle cx="4" cy="4" r="4" fill="#aaa"/><path d="M2.500 2.500l3 3M5.500 2.500l-3 3" stroke="#fff"/></svg></button>
                        <button class="mid" aria-label="Disque de navigation"><svg viewBox="0 0 24 24" width="24" height="24"><path d="M12 1h10v11a10.500 10.500 0 1 1-10-11z" fill="#eef0f4" stroke="#8a8f99"/><circle cx="12" cy="12" r="6" fill="#e4e7ee" stroke="#8a8f99"/><path d="M8 17l-3 3M16 17l3 3" stroke="#8a8f99"/></svg><i class="caret"></i></button>
                        <hr>
                        <button class="mid" aria-label="Zoom"><svg viewBox="0 0 18 18" width="18" height="18"><path d="M1 1h11v11H1z" fill="#b7d3a5" stroke="#8fb07a"/><circle cx="12" cy="12" r="3.500" fill="#fff" stroke="#888"/><path d="M14.500 14.500l3 3" stroke="#888" stroke-width="2"/></svg><i class="caret"></i></button>
                        <button class="foot" aria-label="Options de la barre"><svg viewBox="0 0 8 8" width="9" height="9"><circle cx="4" cy="4" r="3.500" fill="#fff" stroke="#aaa"/><path d="M2 4h4" stroke="#999" stroke-width="1.500"/></svg></button>
                    </div>
                </div>
                <div class="vscroll">
                    <svg width="10" height="8"><use href="#i-up"/></svg>
                    <div class="track"><div class="thumb"></div></div>
                    <svg width="10" height="8"><use href="#i-down"/></svg>
                </div>
            </div>
            <div class="view-bar">
                <button class="scale">1 : 100</button>
                <div class="view-icons">
                    <svg viewBox="0 0 16 14" width="16" height="14"><path d="M.5 1h15v12H.5z" fill="#fff" stroke="#444"/><path d="M2 3h2M6 3h2M10 3h2M4 5h2M8 5h2M12 5h2M2 7h2M6 7h2M10 7h2M4 9h2M8 9h2M12 9h2M2 11h2M6 11h2M10 11h2" stroke="#777" stroke-width="2"/></svg>
                    <svg viewBox="0 0 16 14" width="16" height="14"><path d="M1 5l3-4h11v8l-3 4H1z" fill="#9ccdf0" stroke="#1f5f96"/><path d="M1 5h11v8M12 5l3-4" fill="none" stroke="#1f5f96"/></svg>
                    <svg viewBox="0 0 16 14" width="16" height="14"><path d="M6 0v2M1 2l1.500 1.500M0 7h2M1 12l2-2M11 1L9.500 3" stroke="#e09a10" stroke-width="1.500"/><circle cx="6" cy="7" r="3.500" fill="#fff2b0" stroke="#e09a10"/><use href="#i-cross" x="8" y="6" width="8" height="8"/></svg>
                    <svg viewBox="0 0 16 14" width="16" height="14"><circle cx="6" cy="5" r="4.500" fill="#dff0ff" stroke="#3579b8"/><path d="M2 12h7" stroke="#333" stroke-width="2"/><use href="#i-cross" x="8" y="6" width="8" height="8"/></svg>
                    <svg viewBox="0 0 16 14" width="16" height="14"><path d="M1 4l2-1 1 2h5v5l-3 2c-3 0-4-2-4-5z" fill="#eee" stroke="#444"/><path d="M4 3l3-2 2 3" fill="none" stroke="#444"/><use href="#i-bulb" x="10" y="2" width="6" height="12"/></svg>
                    <svg viewBox="0 0 16 14" width="16" height="14"><path d="M0 10h4V3h9M3 12V5h8" fill="none" stroke="#2d6da8" stroke-width="1.500"/><path d="M6 6h2v6H6z" fill="#444"/><use href="#i-cross" x="8" y="5" width="8" height="8"/></svg>
                    <svg viewBox="0 0 16 14" width="16" height="14"><path d="M0 10h4V3h8M3 12V5h7" fill="none" stroke="#2d6da8" stroke-width="1.500"/><path d="M6 6h2v6H6z" fill="#b03030"/><use href="#i-bulb" x="10" y="2" width="6" height="12"/></svg>
                    <svg viewBox="0 0 16 16" width="16" height="16"><use href="#i-house"/><path d="M8 10h7v5H8z" fill="#dff5e8" stroke="#2b6b4b"/><path d="M10 10V8h3v2" fill="none" stroke="#2b6b4b"/></svg>
                    <svg viewBox="0 0 16 14" width="16" height="14"><path d="M3 7L1 3l3-1M15 6l-2-4h-2" fill="none" stroke="#333"/><circle cx="5" cy="9" r="2.500" fill="#dce9f5" stroke="#333"/><circle cx="12" cy="7.500" r="2.500" fill="#dce9f5" stroke="#333"/><path d="M7 8l3-.5" stroke="#333"/></svg>
                    <svg viewBox="0 0 16 14" width="16" height="14"><use href="#i-bulb" x="5" y="1" width="6" height="12"/></svg>
                    <svg viewBox="0 0 16 14" width="16" height="14"><path d="M1 2h13v9H1z" fill="#fff" stroke="#333" stroke-dasharray="2 1"/><path d="M3 4v6" stroke="#333"/><circle cx="11" cy="10" r="3" fill="#ddd" stroke="#222" stroke-width="1.500"/></svg>
                    <svg viewBox="0 0 16 14" width="16" height="14"><path d="M1 4l4-3h7v8M1 4v8M5 4v8M9 4v8M1 4h8l3-3M1 8h8" fill="none" stroke="#444"/><path d="M1 12V8M5 12V8" stroke="#c03030" stroke-width="1.500"/><use href="#i-bulb" x="10" y="2" width="6" height="12"/></svg>
                    <svg viewBox="0 0 16 14" width="16" height="14"><path d="M4 4l3-3h8v8l-3 3" fill="#ddd" stroke="#444"/><path d="M1 6l2-2h9v9H3l-2-1z" fill="#eee" stroke="#444"/><path d="M5 4v9M8 4v9" stroke="#444"/></svg>
                    <svg viewBox="0 0 16 14" width="16" height="14"><path d="M2 1v12M14 1v5M2 3h12" stroke="#333"/><path d="M4 12h4" stroke="#333" stroke-dasharray="1 1"/><path d="M9 8h6v5H9z" fill="#777" stroke="#333"/><path d="M10 8V6h4v2" fill="none" stroke="#333"/></svg>
                </div>
                <div class="hscroll">
                    <svg width="8" height="10"><use href="#i-left"/></svg>
                    <div class="track"><div class="thumb"></div></div>
                    <svg width="8" height="10"><use href="#i-right"/></svg>
                </div>
                <svg class="grip" viewBox="0 0 10 10" width="10" height="10"><path d="M8 0h2v2H8zM4 4h2v2H4zM8 4h2v2H8zM0 8h2v2H0zM4 8h2v2H4zM8 8h2v2H8z" fill="#bbb"/></svg>
            </div>
        </section>

        <aside class="props">
            <div class="pal-title"><span>Propriétés</span><button class="x" aria-label="Fermer les propriétés"><svg width="10" height="10"><use href="#i-close"/></svg></button></div>
            <button class="type-box">
                <span class="thumb-box"><svg viewBox="0 0 32 32" width="32" height="32"><path d="M4 13v13l14 5V18z" fill="#fff" stroke="#444b58"/><path d="M18 18v13l11-6V12z" fill="#c5c9d2" stroke="#444b58"/><path d="M2 13L10 5l12-4 9 11-13 7-9-11-6 7z" fill="#e3e6eb" stroke="#444b58"/><path d="M7 18l5 2v9l-5-2z" fill="#3d434f"/></svg></span>
                <span>Vue 3D</span><i class="caret big"></i>
            </button>
            <div class="type-row">
                <div class="combo"><select aria-label="Filtre"><option>Vue 3D: {3D}</option></select></div>
                <button class="edit-type"><svg viewBox="0 0 16 16" width="16" height="16"><path d="M1 3l1-2h5v6H1zM8 3l1-2h5v6H8zM1 9h6v6H1z" fill="#f2f2f2" stroke="#555"/><path d="M8 6h7v9H8z" fill="#fff" stroke="#333"/><path d="M9 8h5" stroke="#333" stroke-width="2"/><path d="M10 11h3l-1.500 2z" fill="#2a6fc0"/></svg><span>Modifier le type</span></button>
            </div>
            <div class="grid-wrap">
            <table class="grid">
                <colgroup><col class="c-name"><col class="c-val"><col></colgroup>
                <tr class="group"><th colspan="2">Graphismes</th><td><svg width="8" height="10"><use href="#i-fold"/></svg></td></tr>
                <tr><th><label for="scale">Echelle de la vue</label></th><td><input id="scale" class="field" type="text" value="1 : 100"></td><td></td></tr>
                <tr class="off"><th>Valeur de l'éche...</th><td>100</td><td></td></tr>
                <tr><th>Niveau de détail</th><td>Elevé</td><td></td></tr>
                <tr><th>Visibilité des élé...</th><td>Afficher l'original</td><td></td></tr>
                <tr><th>Remplacement...</th><td><button class="cell">Modifier...</button></td><td></td></tr>
                <tr><th>Options d'affic...</th><td><button class="cell">Modifier...</button></td><td></td></tr>
                <tr><th>Discipline</th><td>Coordination</td><td></td></tr>
                <tr><th>Afficher les lign...</th><td>Par discipline</td><td></td></tr>
                <tr><th>Style d'affichag...</th><td>Aucun(e)</td><td></td></tr>
                <tr><th><label for="sun">Trajectoire du s...</label></th><td><input id="sun" type="checkbox"></td><td></td></tr>
                <tr class="group"><th colspan="2">Etendues</th><td><svg width="8" height="10"><use href="#i-fold"/></svg></td></tr>
                <tr><th><label for="crop">Cadrer la vue</label></th><td><input id="crop" type="checkbox"></td><td></td></tr>
                <tr><th><label for="cropvis">Zone cadrée vis...</label></th><td><input id="cropvis" type="checkbox"></td><td></td></tr>
                <tr><th><label for="anno">Cadrage de l'an...</label></th><td><input id="anno" type="checkbox"></td><td></td></tr>
                <tr><th><label for="far">Délimitation élo...</label></th><td><input id="far" type="checkbox"></td><td></td></tr>
                <tr class="off"><th>Décalage de la ...</th><td>304800.0</td><td></td></tr>
                <tr><th>Définition d'un...</th><td>Aucun(e)</td><td></td></tr>
                <tr><th><label for="sect">Zone de coupe</label></th><td><input id="sect" type="checkbox"></td><td></td></tr>
                <tr class="group"><th colspan="2">Caméra</th><td><svg width="8" height="10"><use href="#i-fold"/></svg></td></tr>
                <tr><th>Paramètres de r...</th><td><button class="cell">Modifier...</button></td><td></td></tr>
                <tr class="off"><th><label for="lock">Orientation verr...</label></th><td><input id="lock" type="checkbox" disabled></td><td></td></tr>
                <tr><th>Mode de projec...</th><td>Orthographique</td><td></td></tr>
                <tr><th>Elévation de l'oeil</th><td>15732.9</td><td></td></tr>
                <tr><th>Elévation cible</th><td>1984.1</td><td></td></tr>
                <tr class="off"><th>Position de la c...</th><td>Réglage</td><td></td></tr>
                <tr class="group"><th colspan="2">Données d'identification</th><td><svg width="8" height="10"><use href="#i-fold"/></svg></td></tr>
                <tr><th>Gabarit de vue</th><td><button class="cell">&lt;Aucun&gt;</button></td><td></td></tr>
                <tr><th>Nom de la vue</th><td>{3D}</td><td></td></tr>
                <tr class="off"><th>Dépendance</th><td>Indépendant</td><td></td></tr>
                <tr><th>Titre sur la feuille</th><td></td><td></td></tr>
                <tr class="group"><th colspan="2">Phase de construction</th><td><svg width="8" height="10"><use href="#i-fold"/></svg></td></tr>
                <tr><th>Filtre des phases</th><td>Afficher tout</td><td></td></tr>
                <tr><th>Phase</th><td>Nouvelle constr...</td><td></td></tr>
            </table>
            </div>
            <div class="props-foot"><a href="#">Aide des propriétés</a><button class="apply" disabled>Appliquer</button></div>
        </aside>
    </main>

    <footer class="status">
        <span class="hint">Cliquez pour sélectionner. Appuyez sur TAB pour afficher d'autres options, sur CTRL pour ajouter et sur MAJ pour désactiver.</span>
        <div class="worksets">
            <svg viewBox="0 0 16 16" width="16" height="16"><path d="M5 2h3v4H5zM10 1h3v4h-3zM1 7h4v3H1zM6 6h4v4H6zM11 6h4v4h-4zM2 11h2v4H2zM7 11h2v4H7zM12 11h2v4h-2z" fill="#aaa" stroke="#888"/></svg>
            <div class="combo white"><select aria-label="Sous-projet actif"><option></option></select></div>
            <div class="filter count"><svg viewBox="0 0 16 16" width="16" height="16"><path d="M4 1h10l-3 6H7z" fill="#ddd" stroke="#999"/><path d="M2 15l2-4 4-4 2 2-4 4z" fill="#bbb" stroke="#888"/></svg><span>:0</span></div>
            <svg viewBox="0 0 16 16" width="16" height="16"><path d="M1 1h14v14H1z" fill="#fff" stroke="#222"/><path d="M1 2.500h14" stroke="#333" stroke-width="3"/><path d="M4 5v7h2M4 8h2M7 7h6M7 10h6M7 13h6" fill="none" stroke="#333"/></svg>
            <svg viewBox="0 0 16 16" width="16" height="16"><path d="M1 1h14v14H1z" fill="#999"/><path d="M3 12h5M8 4v7l2-1 2 3" fill="none" stroke="#ddd"/></svg>
            <div class="combo white"><select class="dim" aria-label="Variante active"><option>Modèle de base</option></select></div>
        </div>
        <div class="filters">
            <svg viewBox="0 0 16 16" width="16" height="16"><rect x="0" y="3" width="8" height="5" rx="2.500" fill="none" stroke="#c08a10" stroke-width="2"/><rect x="7" y="3" width="8" height="5" rx="2.500" fill="none" stroke="#e0a91e" stroke-width="2"/><use href="#i-arrow" x="7" y="4" width="8" height="12"/></svg>
            <svg viewBox="0 0 16 16" width="16" height="16"><path d="M0 12l5-5h10l-4 5zM3 6l4-4h8l-4 4z" fill="#cfe6fa" stroke="#1f66ad"/><use href="#i-arrow" x="8" y="4" width="8" height="12"/></svg>
            <svg viewBox="0 0 16 16" width="16" height="16"><path d="M1 2h9v4l2 3H0l1-3zM5 9v5" fill="#f0863c" stroke="#a64a10"/><use href="#i-cross" x="9" y="0" width="7" height="7"/><use href="#i-arrow" x="8" y="5" width="8" height="11"/></svg>
            <svg viewBox="0 0 16 16" width="16" height="16"><path d="M1 3l7-2v11l-7 3z" fill="#a9d4f7" stroke="#1f66ad"/><use href="#i-arrow" x="7" y="4" width="8" height="12"/></svg>
            <svg viewBox="0 0 16 16" width="16" height="16"><path d="M5 0v10M0 5h10M3.500 2L5 0l1.500 2M3.500 8L5 10l1.500-2M2 3.500L0 5l2 1.500M8 3.500L10 5 8 6.500" fill="none" stroke="#222"/><use href="#i-arrow" x="8" y="4" width="8" height="12"/></svg>
            <svg viewBox="0 0 16 16" width="16" height="16"><circle cx="8" cy="8" r="5" fill="none" stroke="#999" stroke-width="3" stroke-dasharray="3 1"/></svg>
            <div class="filter"><svg viewBox="0 0 16 16" width="16" height="16"><path d="M1 1h14l-5 7v7H7V8z" fill="url(#metal)" stroke="#444"/></svg><span>:0</span></div>
        </div>
    </footer>
</body>
</html>
```

FILE: styles.css
```css
* {
    margin: 0;
    padding: 0;
    box-sizing: border-box;
}

body {
    font-family: "Noto Sans", "Open Sans", sans-serif;
    font-size: 11px;
    line-height: 15px;
    color: #222;
    background-color: #cbcbcb;
    display: flex;
    flex-direction: column;
    height: 100vh;
    overflow: hidden;
    border-bottom: 2px solid #150c14;
}

button,
input,
select {
    font: inherit;
    color: inherit;
}

button {
    background: none;
    border: none;
    cursor: pointer;
}

svg {
    flex: none;
    display: block;
}

.sprite {
    position: absolute;
    width: 0;
    height: 0;
}

.caret {
    display: block;
    flex: none;
    border: 2px solid transparent;
    border-top: 3px solid #333;
    border-bottom: none;
}

.caret.big {
    border-width: 4px 4px 0;
}

.caret.side {
    border: 4px solid transparent;
    border-left: 4px solid #333;
    border-right: none;
    margin-right: 5px;
}

/* title bar */
.titlebar {
    display: flex;
    height: 29px;
    align-items: flex-start;
}

.qat,
.infocenter {
    display: flex;
    align-items: center;
    height: 23px;
}

.qbtn {
    width: 24px;
    height: 22px;
    display: flex;
    align-items: center;
    justify-content: center;
}

.qbtn.after {
    margin-left: 5px;
}

.qbtn.active {
    background-color: #b9d9f5;
    border: 1px solid #1f66ad;
}

.qbtn.letter {
    font-size: 18px;
    font-weight: bold;
    color: #333;
}

.qbtn.logo {
    font-size: 22px;
    font-weight: bold;
    line-height: 22px;
    color: #2e7fc4;
    text-shadow: 1px 1px 0 #1a568f;
}

.qdrop {
    width: 12px;
    height: 22px;
    display: flex;
    align-items: center;
    justify-content: center;
}

.qdrop.last {
    margin-left: 4px;
}

.qsep {
    width: 1px;
    height: 22px;
    margin: 0 3px;
    background-color: #b4b4b4;
}

.doc-title {
    flex: 1;
    font-size: 11px;
    font-weight: normal;
    line-height: 20px;
    text-align: center;
    color: #444;
}

.search {
    width: 180px;
    height: 22px;
    border: 1px solid #000;
    background-color: #fff;
    padding: 0 3px;
}

.search::placeholder {
    font-style: italic;
    color: #666;
}

.account {
    display: flex;
    align-items: center;
    gap: 4px;
    width: 120px;
    padding-left: 3px;
    white-space: nowrap;
}

.window-btns {
    display: flex;
    margin-left: 10px;
}

.wbtn {
    width: 25px;
    display: flex;
    justify-content: center;
}

/* ribbon */
.tabs {
    display: flex;
    gap: 1px;
    height: 20px;
}

.tab {
    padding: 0 10px;
    line-height: 20px;
    color: #333;
    text-decoration: none;
    white-space: nowrap;
}

.tab.file {
    background-color: #2a7ab5;
    color: #fff;
    padding: 0 9px;
    margin-right: 1px;
}

.tab.current {
    background-color: #eee;
    color: #000;
}

.ribbon-toggle {
    margin-left: auto;
    padding: 0 2px;
    display: flex;
    align-items: center;
}

.ribbon {
    display: flex;
    height: 96px;
    background-color: #eee;
    border-bottom: 1px solid #cbcbcb;
}

.panel {
    display: flex;
    flex-direction: column;
    border-right: 1px solid #dadada;
}

.panel.roomy {
    padding-right: 2px;
}

.panel.select-panel {
    width: 91px;
}

.panel.opening {
    width: 154px;
}

.panel.datum {
    width: 98px;
}

.panel.last {
    flex: 1;
    border-right: none;
}

.tools {
    flex: 1;
    display: flex;
    padding-top: 3px;
}

.panel-title {
    height: 20px;
    padding-bottom: 2px;
    display: flex;
    align-items: center;
    justify-content: center;
    gap: 6px;
    white-space: nowrap;
}

.panel-title.left {
    justify-content: flex-start;
    padding-left: 6px;
}

.tool {
    display: flex;
    flex-direction: column;
    align-items: center;
    height: 72px;
    padding-top: 2px;
    position: relative;
    white-space: nowrap;
}

.tool span {
    margin-top: 4px;
}

.tool:hover {
    background-color: #d9e8f5;
}

.tool[disabled],
.small[disabled] {
    color: #aaa;
}

.tool.modify {
    width: 51px;
    margin-left: 20px;
    background-color: #b5d5f3;
    border: 1px solid #2f6eb0;
    padding-top: 1px;
}

.tool.split .caret {
    position: absolute;
    right: 4px;
    top: 54px;
}

.big-a {
    font-family: "Liberation Sans", sans-serif;
    font-size: 34px;
    line-height: 32px;
    font-weight: bold;
    fill: #fff;
    stroke: #3a404d;
    overflow: visible;
    filter: drop-shadow(1px -1px 0 #9da3af) drop-shadow(1px 0 0 #6b7280);
}

.w36 { width: 36px; }
.w40 { width: 40px; }
.w44 { width: 44px; }
.w48 { width: 48px; }
.w56 { width: 56px; }
.w64 { width: 64px; }
.w80 { width: 80px; }
.w84 { width: 84px; }
.w92 { width: 92px; }

.stack {
    display: flex;
    flex-direction: column;
    padding-left: 7px;
}

.stack.low {
    padding-top: 12px;
}

.small {
    display: flex;
    align-items: center;
    gap: 5px;
    height: 24px;
    white-space: nowrap;
}

.options-bar {
    height: 26px;
    background-color: #eee;
}

/* work area */
.workspace {
    flex: 1;
    min-height: 0;
    display: grid;
    grid-template-columns: 218px minmax(0, 1fr) 218px;
    column-gap: 3px;
    padding-top: 2px;
}

.pal-title {
    display: flex;
    align-items: center;
    justify-content: space-between;
    height: 20px;
    padding: 0 4px 0 3px;
    background-color: #eee;
    color: #444;
    white-space: nowrap;
}

.x {
    display: flex;
}

.browser {
    display: flex;
    flex-direction: column;
    min-height: 0;
    background-color: #eee;
}

.tree {
    flex: 1;
    min-height: 0;
    list-style: none;
    background-color: #fff;
    margin: 0 1px;
    overflow: hidden;
}

.node {
    display: flex;
    align-items: center;
    height: 18px;
    padding: 0 0 2px 4px;
    color: #111;
    white-space: nowrap;
    position: relative;
}

.node svg {
    margin-left: 7px;
}

.node span {
    margin-left: 3px;
    padding: 0 3px;
}

.node .sel {
    background-color: #e0e0de;
    line-height: 18px;
}

.node.sub {
    padding-left: 24px;
}

.node.sub span {
    margin-left: 10px;
    padding-right: 0;
}

/* dotted guides */
.node::before {
    content: "";
    position: absolute;
    left: 8px;
    top: 0;
    bottom: 0;
    border-left: 1px dotted #999;
}

.node.first {
    padding-bottom: 0;
}

.node.first::before {
    top: 9px;
}

.node.tail::before {
    bottom: 9px;
}

.node::after {
    content: "";
    position: absolute;
    left: 9px;
    width: 10px;
    top: 8px;
    border-top: 1px dotted #999;
}

.node.sub::after {
    left: 28px;
    width: 15px;
}

.exp {
    width: 9px;
    height: 9px;
    flex: none;
    border: 1px solid #999;
    z-index: 1;
    background: linear-gradient(#3a4a80, #3a4a80) center / 5px 1px no-repeat, linear-gradient(#3a4a80, #3a4a80) center / 1px 5px no-repeat, #fff;
}

.exp.minus {
    background: linear-gradient(#3a4a80, #3a4a80) center / 5px 1px no-repeat, #fff;
}

.exp.none {
    visibility: hidden;
}

.hscroll {
    display: flex;
    align-items: center;
    height: 16px;
    padding: 0 4px;
    gap: 6px;
    background-color: #eee;
}

.hscroll .track {
    flex: 1;
    height: 16px;
}

.thumb {
    background-color: #cbcbcb;
}

.hscroll .thumb {
    width: 16px;
    height: 16px;
    margin: 0 auto;
}

.hscroll .tree-thumb {
    width: 87%;
    margin: 0;
}

.browser .hscroll {
    margin-bottom: 1px;
}

.view {
    display: flex;
    flex-direction: column;
    min-width: 0;
    min-height: 0;
    background-color: #fff;
}

.view-tabs {
    display: flex;
    justify-content: space-between;
    height: 20px;
    background-color: #cbcbcb;
}

.view-tab {
    display: flex;
    align-items: center;
    width: 128px;
    padding: 0 5px;
    gap: 7px;
    background-color: #fff;
}

.view-tab .x {
    margin-left: auto;
}

.tab-list {
    padding: 2px 5px 0;
    display: flex;
    align-items: center;
}

.view-body {
    flex: 1;
    min-height: 0;
    display: flex;
}

.canvas {
    flex: 1;
    min-width: 0;
    position: relative;
}

.model {
    width: 100%;
    height: 100%;
}

.sign {
    font-family: "Liberation Sans", sans-serif;
    font-size: 35px;
    font-weight: bold;
    fill: #03061f;
    stroke: #03061f;
    stroke-width: 1px;
}

.viewcube {
    position: absolute;
    right: 25px;
    top: 51px;
    overflow: visible;
}

.cube-face {
    font-size: 8px;
    font-weight: bold;
    fill: #999;
}

.compass {
    font-size: 15px;
    font-weight: bold;
    fill: #ddd;
    stroke: #999;
}

.navbar {
    position: absolute;
    right: 1px;
    top: 173px;
    width: 36px;
    height: 118px;
    display: flex;
    flex-direction: column;
    align-items: center;
    padding: 2px 2px;
    background-color: #f2f2f2;
    border: 2px solid #bbb;
    border-radius: 6px;
}

.navbar button {
    align-self: flex-end;
}

.navbar .mid {
    align-self: center;
    display: flex;
    flex-direction: column;
    align-items: center;
    gap: 7px;
    padding: 8px 0 5px;
}

.navbar .caret {
    border-top-color: #888;
}

.navbar hr {
    width: 26px;
    border: none;
    border-top: 1px solid #bbb;
}

.navbar .foot {
    margin-top: auto;
}

.vscroll {
    width: 16px;
    margin: 2px 1px 0 0;
    padding: 6px 0;
    display: flex;
    flex-direction: column;
    align-items: center;
    background-color: #eee;
}

.vscroll .track {
    flex: 1;
    width: 16px;
    display: flex;
    flex-direction: column;
    justify-content: center;
}

.vscroll .thumb {
    height: 17px;
}

.view-bar {
    display: flex;
    align-items: center;
    height: 16px;
    margin: 0 1px 2px 2px;
    background-color: #eee;
}

.scale {
    width: 79px;
    padding-left: 3px;
}

.view-icons {
    display: flex;
    align-items: center;
    gap: 5px;
}

.view-bar .hscroll {
    flex: 1;
    padding: 0 2px 0 8px;
}

.grip {
    margin: 4px 2px 0 8px;
}

/* properties */
.props {
    display: flex;
    flex-direction: column;
    min-height: 0;
    padding-left: 2px;
    background-color: #eee;
}

.props .pal-title {
    padding: 0 3px 0 2px;
}

.type-box {
    display: flex;
    align-items: center;
    height: 71px;
    padding: 2px;
    border: 1px solid #ccc;
    border-right: none;
    color: #444;
}

.type-box .caret {
    margin-left: auto;
}

.thumb-box {
    width: 66px;
    height: 66px;
    margin-right: 3px;
    border: 1px solid #ccc;
    display: flex;
    align-items: center;
    justify-content: center;
}

.type-row {
    display: flex;
    align-items: center;
    height: 25px;
}

.combo {
    position: relative;
}

.combo::after {
    content: "";
    position: absolute;
    right: 7px;
    top: 6px;
    width: 5px;
    height: 5px;
    border: solid #555;
    border-width: 0 1px 1px 0;
    transform: rotate(45deg);
    pointer-events: none;
}

.combo select {
    appearance: none;
    width: 98px;
    height: 23px;
    padding: 0 4px;
    background-color: #e1e1e1;
    border: 1px solid #999;
    border-radius: 0;
}

.edit-type {
    display: flex;
    align-items: center;
    gap: 5px;
    padding-left: 6px;
    white-space: nowrap;
}

.grid-wrap {
    flex: 1;
    min-height: 0;
    background-color: #fff;
    overflow: hidden;
}

.grid {
    width: 100%;
    table-layout: fixed;
    border-collapse: separate;
    border-spacing: 0;
    color: #111;
}

.c-name {
    width: 103px;
}

.c-val {
    width: 101px;
}

.grid th,
.grid td {
    height: 18px;
    font-weight: normal;
    text-align: left;
    line-height: 15px;
    white-space: nowrap;
    overflow: hidden;
    border-bottom: 1px dotted #777;
    border-right: 1px dotted #777;
}

.grid th {
    padding-left: 8px;
}

.grid td {
    padding-left: 2px;
}

.grid .group th,
.grid .group td {
    background-color: #dadada;
    border: none;
}

.grid .group th {
    padding-left: 2px;
}

.grid .group td {
    padding-left: 0;
}

.grid .off {
    color: #808080;
}

.grid .field {
    display: block;
    width: 100px;
    height: 17px;
    margin-left: -2px;
    padding: 0 5px;
    border: 1px solid #000;
    background-color: #fff;
}

.grid .cell {
    display: block;
    width: 98px;
    height: 16px;
    line-height: 14px;
    background-color: #e1e1e1;
    border: 1px solid #adadad;
    border-width: 1px 2px 2px 1px;
}

.grid input[type="checkbox"] {
    appearance: none;
    display: block;
    width: 13px;
    height: 13px;
    margin: 3px 0 0 1px;
    border: 1px solid #333;
    background-color: #fff;
}

.grid input[disabled] {
    border-color: #ccc;
}

.props-foot {
    display: flex;
    align-items: center;
    justify-content: space-between;
    height: 28px;
    padding: 0 2px 2px;
    white-space: nowrap;
}

.props-foot a {
    color: #0b5cc4;
}

.apply {
    width: 73px;
    height: 22px;
    background-color: #cbcbcb;
    border: 1px solid #bdbdbd;
    color: #8a8a8a;
}

/* status bar */
.status {
    display: grid;
    grid-template-columns: 834px 1fr auto;
    align-items: center;
    height: 24px;
    white-space: nowrap;
}

.hint {
    padding-left: 1px;
    color: #111;
}

.worksets,
.filters,
.filter {
    display: flex;
    align-items: center;
}

.worksets {
    gap: 8px;
}

.combo.white select {
    width: 204px;
    height: 18px;
    padding: 0 2px;
    background-color: #fff;
    border: none;
}

.combo.white::after {
    top: 5px;
    border-color: #aaa;
}

.combo .dim {
    color: #777;
}

.count {
    width: 47px;
    gap: 4px;
}

.filters {
    gap: 10px;
    padding-right: 62px;
}
```
